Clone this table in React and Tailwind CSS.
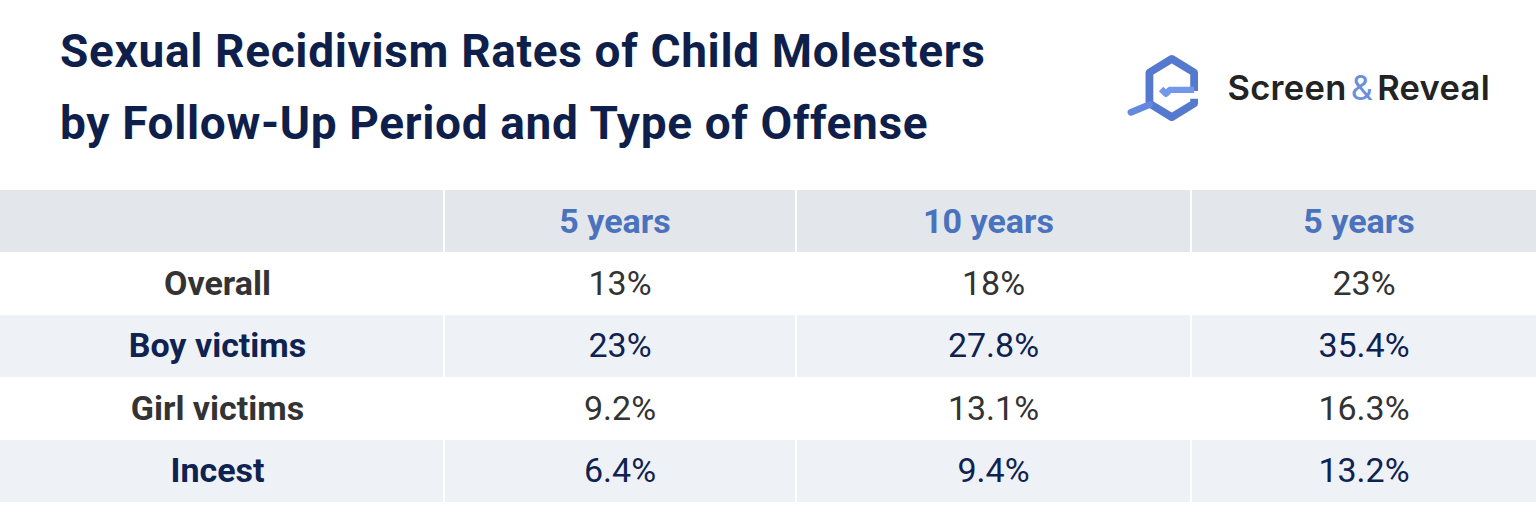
import React from 'react';

const rows = [
  { label: 'Overall', values: ['13%', '18%', '23%'], shaded: false },
  { label: 'Boy victims', values: ['23%', '27.8%', '35.4%'], shaded: true },
  { label: 'Girl victims', values: ['9.2%', '13.1%', '16.3%'], shaded: false },
  { label: 'Incest', values: ['6.4%', '9.4%', '13.2%'], shaded: true },
];

const headers = ['5 years', '10 years', '5 years'];

const Logo = () => (
  <div className="flex items-center gap-[24px]">
    <svg width="78" height="68" viewBox="0 0 80 70" fill="none">
      <path
        d="M71 38 L71 19 L48 5 L25 19 L25 51 L48 65 L71 51 L71 46"
        stroke="#5479cf"
        strokeWidth="8"
        strokeLinejoin="round"
      />
      <path d="M25 52 L6 60" stroke="#6488de" strokeWidth="7" strokeLinecap="round" />
      <path d="M71 37 L46 37 L42 41 L37 36" stroke="#7398ea" strokeWidth="6.5" strokeLinejoin="round" />
    </svg>
    <div className="text-[34.5px] font-semibold text-[#232323] tracking-[0.3px]" style={{ fontFamily: 'Inter, sans-serif' }}>
      Screen<span className="font-normal text-[#6b8fdb] mx-[4px]">&amp;</span>Reveal
    </div>
  </div>
);

export default function App() {
  return (
    <div className="w-[1536px] h-[526px] bg-white overflow-hidden" style={{ fontFamily: 'Roboto, sans-serif' }}>
      <div className="flex items-start justify-between pl-[60px] pr-[46px] pt-[15px] h-[190px]">
        <h1 className="text-[46px] font-bold leading-[72px] tracking-[0.65px] text-[#0f1f4b]">
          Sexual Recidivism Rates of Child Molesters
          <br />
          by Follow-Up Period and Type of Offense
        </h1>
        <div className="pt-[39px]">
          <Logo />
        </div>
      </div>

      <div className="grid grid-cols-[443px_350px_393px_344px] gap-x-[2px]">
        <div className="h-[62px] bg-[#e3e7ec]" />
        {headers.map((h, i) => (
          <div key={i} className="h-[62px] bg-[#e3e7ec] flex items-center justify-center pr-[10px] text-[34px] font-bold text-[#4a72bd]">
            {h}
          </div>
        ))}
        {rows.map((r) => (
          <React.Fragment key={r.label}>
            <div
              className={`h-[62.5px] flex items-center justify-center pr-[8px] text-[34px] font-bold ${
                r.shaded ? 'bg-[#eef2f7] text-[#0f2250]' : 'bg-white text-[#333333]'
              }`}
            >
              {r.label}
            </div>
            {r.values.map((v, i) => (
              <div
                key={i}
                className={`h-[62.5px] flex items-center justify-center text-[34px] ${
                  r.shaded ? 'bg-[#eef2f7] text-[#0f2250]' : 'bg-white text-[#333333]'
                }`}
              >
                {v}
              </div>
            ))}
          </React.Fragment>
        ))}
      </div>
    </div>
  );
}
